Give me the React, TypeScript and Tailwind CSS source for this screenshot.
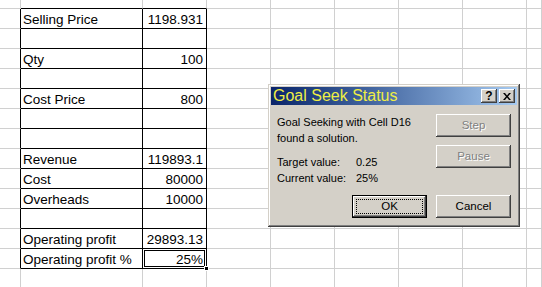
import React from 'react';

const rows: [string, string][] = [
  ['Selling Price', '1198.931'],
  ['', ''],
  ['Qty', '100'],
  ['', ''],
  ['Cost Price', '800'],
  ['', ''],
  ['', ''],
  ['Revenue', '119893.1'],
  ['Cost', '80000'],
  ['Overheads', '10000'],
  ['', ''],
  ['Operating profit', '29893.13'],
  ['Operating profit %', '25%'],
];

const bevel =
  'shadow-[inset_-1px_-1px_0_#404040,inset_1px_1px_0_#ffffff,inset_-2px_-2px_0_#808080,inset_2px_2px_0_#d4d0c8]';

const frameBevel =
  'shadow-[inset_-1px_-1px_0_#404040,inset_1px_1px_0_#d4d0c8,inset_-2px_-2px_0_#808080,inset_2px_2px_0_#ffffff]';

const Sheet = () => {
  const grid = 'border-r border-b border-[#d0d0d0]';
  const black = 'border-r border-b border-black';

  return (
    <div className="grid grid-cols-[21px_122px_64px_64px_64px_64px_64px_64px_1fr] grid-rows-[9px_repeat(13,20px)_1fr] h-full text-[13.5px] text-black font-['Liberation_Sans',Arial,sans-serif]">
      {/* top partial row */}
      <div className={grid} />
      <div className="border-r border-b border-r-[#d0d0d0] border-b-black" />
      <div className="border-r border-b border-r-[#d0d0d0] border-b-black" />
      {[0, 1, 2, 3, 4, 5].map((i) => (
        <div key={i} className={grid} />
      ))}

      {rows.map(([label, value], r) => (
        <React.Fragment key={r}>
          <div className="border-r border-b border-r-black border-b-[#d0d0d0]" />
          <div className={`${black} pl-[2px] pt-[2px] leading-[18px] whitespace-nowrap`}>{label}</div>
          <div className={`${black} relative pr-[3px] pt-[2px] leading-[18px] text-right`}>
            {value}
            {r === rows.length - 1 && (
              <>
                <div className="absolute inset-[1px] border border-black" />
                <div className="absolute right-[-3px] bottom-[-3px] w-[5px] h-[5px] bg-black border border-white" />
              </>
            )}
          </div>
          {[0, 1, 2, 3, 4, 5].map((i) => (
            <div key={i} className={grid} />
          ))}
        </React.Fragment>
      ))}

      {/* bottom partial row */}
      {[0, 1, 2, 3, 4, 5, 6, 7, 8].map((i) => (
        <div key={i} className="border-r border-[#d0d0d0]" />
      ))}
    </div>
  );
};

const Button = ({
  label,
  disabled,
  isDefault,
}: {
  label: string;
  disabled?: boolean;
  isDefault?: boolean;
}) => {
  if (isDefault) {
    return (
      <div className="w-[75px] h-[23px] border border-black bg-[#d4d0c8]">
        <div className={`h-full ${bevel} p-[3px]`}>
          <div className="h-full border border-dotted border-black flex items-center justify-center text-[11.5px]">
            {label}
          </div>
        </div>
      </div>
    );
  }
  return (
    <div
      className={`w-[75px] h-[23px] bg-[#d4d0c8] ${bevel} flex items-center justify-center text-[11.5px] ${
        disabled ? 'text-[#808080] [text-shadow:1px_1px_0_#ffffff]' : 'text-black'
      }`}
    >
      {label}
    </div>
  );
};

const GoalSeekDialog = () => {
  return (
    <div
      className={`absolute left-[268px] top-[84px] w-[252px] h-[143px] bg-[#d4d0c8] ${frameBevel} p-[3px] flex flex-col font-['Liberation_Sans',Arial,sans-serif] text-black`}
    >
      <div className="h-[18px] flex items-center bg-linear-to-r from-[#0a246a] to-[#a6caf0] pl-[2px] pr-[2px]">
        <span className="flex-1 text-[16px] leading-[18px] text-[#eeee44] whitespace-nowrap">Goal Seek Status</span>
        <div className="flex gap-[2px]">
          <div className={`w-[16px] h-[14px] bg-[#d4d0c8] ${bevel} flex items-center justify-center text-[12px] font-bold leading-none`}>
            ?
          </div>
          <div className={`w-[16px] h-[14px] bg-[#d4d0c8] ${bevel} flex items-center justify-center`}>
            <svg width="8" height="7" viewBox="0 0 8 7">
              <path d="M0 0h2l2 2.5L6 0h2L5 3.5 8 7H6L4 4.5 2 7H0l3-3.5z" fill="#000" />
            </svg>
          </div>
        </div>
      </div>

      <div className="flex-1 flex flex-col px-[6px] pt-[9px]">
        <div className="flex">
          <div className="flex-1 text-[11px] leading-[16px]">
            <div>Goal Seeking with Cell D16</div>
            <div>found a solution.</div>
            <div className="mt-[8px] flex">
              <span className="w-[79px]">Target value:</span>
              <span>0.25</span>
            </div>
            <div className="flex">
              <span className="w-[79px]">Current value:</span>
              <span>25%</span>
            </div>
          </div>
          <div className="flex flex-col gap-[8px]">
            <Button label="Step" disabled />
            <Button label="Pause" disabled />
          </div>
        </div>
        <div className="flex justify-end gap-[9px] mt-[9px]">
          <Button label="OK" isDefault />
          <Button label="Cancel" />
        </div>
      </div>
    </div>
  );
};

const App = () => {
  return (
    <div className="relative w-[542px] h-[287px] overflow-hidden bg-white">
      <Sheet />
      <GoalSeekDialog />
    </div>
  );
};

export default App;
